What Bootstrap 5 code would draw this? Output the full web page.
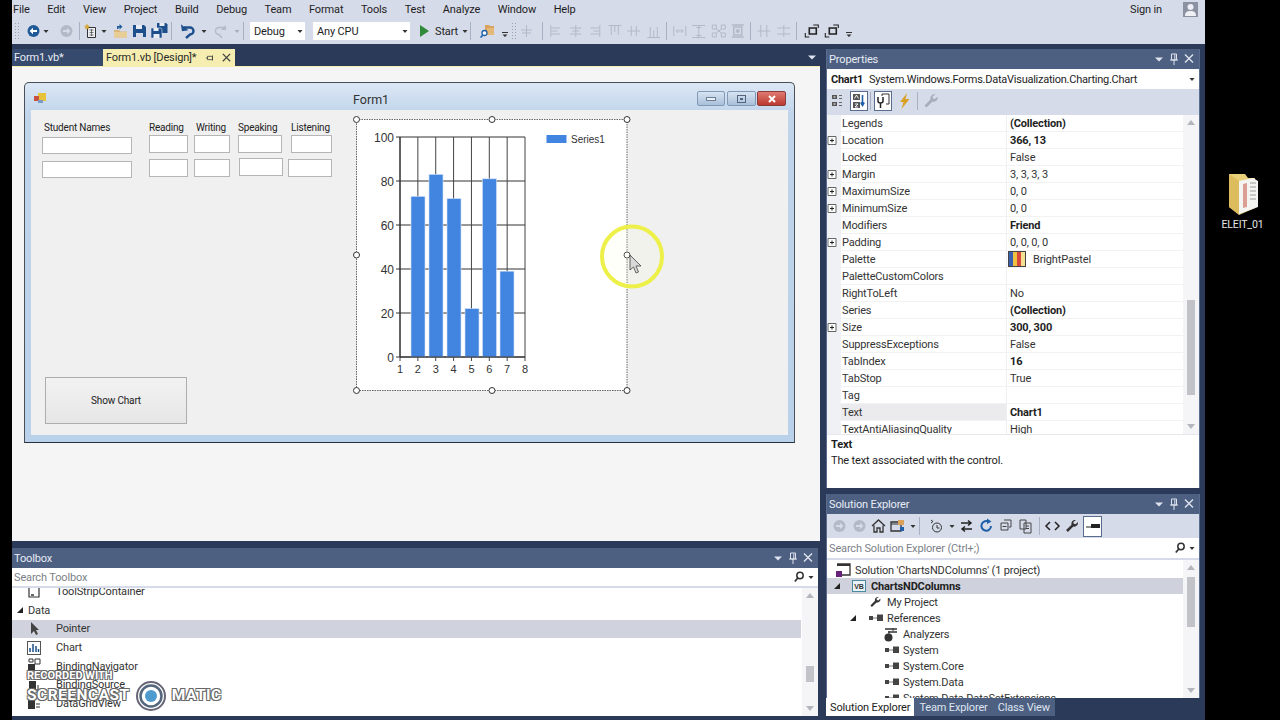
<!DOCTYPE html>
<html lang="en">
<head>
<meta charset="UTF-8">
<title>ChartsNDColumns - Visual Studio</title>
<link href="https://cdn.jsdelivr.net/npm/bootstrap@5.3.0/dist/css/bootstrap.min.css" rel="stylesheet">
<style>
  html, body { height: 720px; overflow: hidden; }
  body { background: #000; font-family: Roboto, "Liberation Sans", sans-serif; font-size: 11px; color: #1e1e1e; line-height: 1; letter-spacing: -.15px; }
  .vs-gutter { width: 12px; flex: none; }
  .vs-window { width: 1193px; flex: none; height: 720px; background: #2a3a58; }
  .vs-desk { width: 75px; flex: none; padding-top: 172px; color: #e6e6e6; font-size: 10.5px; }
  .vs-menubar { height: 20px; background: #d6dbe9; padding-bottom: 1px; }
  .vs-menuitem { padding: 0 8.8px; white-space: nowrap; }
  .vs-menubar .vs-menuitem:first-child { padding-left: 1px; }
  .vs-signin { margin-left: auto; margin-right: 21px; }
  .vs-avatar { margin-right: 7px; }
  .vs-toolbar { height: 24px; background: #d6dbe9; padding: 0 0 2px 2px; }
  .vs-grip { width: 6px; height: 18px; flex: none; background-image: radial-gradient(#9aa1b5 35%, transparent 40%); background-size: 3px 3px; }
  .vs-i { width: 19px; height: 16px; flex: none; display: block; }
  .vs-ia { width: 19.6px; height: 16px; flex: none; display: block; }
  .vs-c { width: 6px; height: 16px; flex: none; display: block; }
  .vs-sep { width: 6px; height: 18px; flex: none; position: relative; }
  .vs-sep::after { content: ""; display: block; width: 1px; height: 18px; margin: 0 auto; background: #a9b0c4; }
  .vs-combo { height: 18px; background: #fff; padding-left: 4px; flex: none; }
  .vs-combo svg { margin-left: auto; margin-right: 2px; }
  .vs-combo-debug { width: 55px; }
  .vs-combo-cpu { width: 97px; }
  .vs-play { margin-left: 5px; }
  .vs-start { margin-left: 1px; }
  .vs-findicon { margin-left: 4px; }
  .vs-grip2 { margin-left: 2px; }
  .vs-tabicon { margin-left: 3px; }
  .vs-main { height: 676px; }
  .vs-left { width: 808px; flex: none; }
  .vs-right { width: 374px; flex: none; margin-left: 6px; padding-top: 5px; }
  .vs-doctabs { height: 23px; border-bottom: 1px solid #f5eeb0; padding-top: 5px; color: #e8ecf4; }
  .vs-tab1 { width: 91px; height: 17px; background: #364a6e; padding: 0 2px; }
  .vs-tab2 { width: 132px; height: 17px; background: #f5eeb0; color: #2a2a2a; padding: 0 3px; white-space: nowrap; }
  .vs-tab2 svg, .vs-tab2 span { flex: none; }
  .vs-tabpin { margin-left: 9px; }
  .vs-tabclose { margin-left: 6px; }
  .vs-docmenu { margin-left: auto; margin-right: 2px; }
  .vs-designer { height: 474px; background: #f5f5f5; padding: 15px 0 0 12px; }
  .vs-form { width: 771px; height: 361px; position: relative; background: linear-gradient(#dbe7f5, #c0d4ea 9%, #b9d1ea); border: 1px solid #4a4f58; border-bottom-color: #28303e; border-radius: 5px 5px 0 0; }
  .vs-client { position: absolute; left: 6px; top: 27px; width: 757px; height: 325px; background: #f0f0f0; }
  .vs-ctl { position: absolute; }
  .vs-formtitle { left: 328px; top: 11px; font-size: 12.5px; color: #333; letter-spacing: 0; }
  .vs-winbtn { top: 8px; height: 15px; border: 1px solid #8199b4; border-radius: 2px; background: linear-gradient(#d6e4f2, #a9c0d9); }
  .vs-winclose { background: linear-gradient(#e07a70, #bb3a30); border-color: #8a3a3a; }
  .vs-label { font-size: 10px; color: #222; white-space: nowrap; letter-spacing: -.2px; }
  .vs-textbox { background: #fff; border: 1px solid #b5b5b5; }
  .vs-showbtn { left: 14px; top: 267px; width: 142px; height: 47px; background: linear-gradient(#f2f2f2, #e6e6e6); border: 1px solid #adadad; font-size: 10px; color: #222; }
  .vs-overlay-svg { position: absolute; left: 325px; top: 27px; overflow: visible; }
  .vs-charttext { font-family: "Liberation Sans", sans-serif; fill: #333; letter-spacing: 0; }
  .vs-toolbox { height: 168px; margin-top: 7px; margin-right: 2px; position: relative; }
  .vs-ptitle { height: 20px; background: #4d6082; color: #e8ecf4; padding: 0 4px 0 2px; flex: none; }
  .vs-ptitle svg { flex: none; }
  .vs-ptitle svg + svg { margin-left: 3px; }
  .vs-search { height: 20px; background: #fff; color: #7c7f88; padding: 0 4px 0 2px; border-bottom: 2px solid #d6dbe9; flex: none; }
  .vs-mag { margin-right: 3px; }
  .vs-search-sol { height: 22px; }
  .vs-toolist { height: 128px; background: #fff; position: relative; overflow: hidden; }
  .vs-toolinner { margin-top: -5.5px; }
  .vs-toolrow { height: 18.6px; padding-left: 22px; color: #333; }
  .vs-toolrow svg { flex: none; margin-right: 14px; }
  .vs-toolicon { margin-left: -8px; }
  .vs-toolsel { background: #d0d3dd; margin-right: 17px; }
  .vs-groupicon { margin-left: -18px; margin-right: 4px !important; }
  .vs-sb { position: absolute; right: 0; top: 0; bottom: 0; width: 16px; background: #f5f5f7; }
  .vs-sbthumb { position: absolute; left: 4px; width: 8px; background: #c2c3c9; }
  .vs-up, .vs-down { position: absolute; left: 4px; width: 0; height: 0; border-left: 4px solid transparent; border-right: 4px solid transparent; }
  .vs-up { top: 5px; border-bottom: 5px solid #b4b6bd; }
  .vs-down { bottom: 5px; border-top: 5px solid #b4b6bd; }
  .vs-watermark { left: 15px; top: 122px; color: #fff; font-weight: 700; letter-spacing: 0; text-shadow: 1px 1px 0 #666, -1px -1px 0 #666, 1px -1px 0 #666, -1px 1px 0 #666; pointer-events: none; }
  .vs-wm1 { font-size: 11px; }
  .vs-wm2 { font-size: 15.5px; margin-top: -1px; letter-spacing: .5px; }
  .vs-wm2 svg { margin: 0 5px 0 5px; }
  .vs-panel { background: #fff; border-left: 1px solid #5a6c8e; border-right: 1px solid #5a6c8e; }
  .vs-props { height: 439px; }
  .vs-selector { height: 20px; background: #fff; padding: 0 4px; flex: none; white-space: nowrap; letter-spacing: -.25px; }
  .vs-selector b { margin-right: 6px; }
  .vs-ptools { height: 26px; background: #d6dbe9; padding: 0 0 2px 1px; flex: none; }
  .vs-picon { width: 21px; height: 16px; display: block; flex: none; }
  .vs-bolt { margin-left: 2px; }
  .vs-pon { background: #fff; border: 1px solid #5a6c8e; width: 18px; height: 20px; padding: 1px; flex: none; margin-left: 1px; }
  .vs-psep { width: 1px; height: 18px; background: #a9b0c4; margin: 0 2px; flex: none; }
  .vs-grid { height: 319px; position: relative; overflow: hidden; background: #fff; flex: none; }
  .vs-prow { height: 17px; position: relative; }
  .vs-pgutter { width: 14px; height: 17px; background: #f0f1f4; flex: none; }
  .vs-pname { width: 166px; height: 17px; padding-left: 1px; border-bottom: 1px solid #f2f2f2; border-right: 1px solid #efefef; color: #333; flex: none; white-space: nowrap; overflow: hidden; }
  .vs-pval { width: 176px; height: 17px; padding-left: 3px; border-bottom: 1px solid #f2f2f2; color: #333; flex: none; white-space: nowrap; }
  .vs-pbold { font-weight: 700; color: #1e1e1e; }
  .vs-phigh { background: #ebebee; }
  .vs-swatch { display: flex; width: 18px; height: 16px; border: 1px solid #444; margin: 0 7px 0 -2px; }
  .vs-swatch i { flex: 1; }
  .vs-desc { height: 54px; background: #fff; padding: 4px 4px; border-top: 1px solid #e8e8ec; flex: none; }
  .vs-desc b { display: block; margin-bottom: 5px; }
  .vs-solution { height: 222px; margin-top: 6px; }
  .vs-stools { height: 24px; background: #d6dbe9; padding-left: 3px; flex: none; }
  .vs-pinbox { width: 19px; height: 21px; background: #fff; border: 1px solid #5a6c8e; flex: none; margin-left: 2px; }
  .vs-tree { height: 138px; background: #fff; position: relative; overflow: hidden; padding-top: 2px; flex: none; }
  .vs-node { height: 16px; white-space: nowrap; color: #333; }
  .vs-node svg { flex: none; }
  .vs-indent { flex: none; }
  .vs-nodesel { background: #cfd2dd; margin-right: 15px; font-weight: 700; color: #222; }
  .vs-btabs { height: 18px; background: #2a3a58; flex: none; margin: 0 -1px; }
  .vs-btab { height: 18px; padding: 1px 5px 0; color: #dfe5f0; background: #4d6082; white-space: nowrap; }
  .vs-bton { background: #fff; color: #222; padding: 1px 4px 0; }
</style>
</head>
<body class="d-flex">
<svg width="0" height="0" class="position-absolute">
  <defs>
    <symbol id="s-caret" viewBox="0 0 6 16"><path d="M0.5 7h5L3 10z" fill="#333"/></symbol>
    <symbol id="s-caretg" viewBox="0 0 6 16"><path d="M0.5 7h5L3 10z" fill="#a7adbd"/></symbol>
    <symbol id="s-over" viewBox="0 0 8 16"><path d="M1 9h6v1H1zM1.5 11.5h5L4 14z" fill="#333"/></symbol>
    <symbol id="s-back" viewBox="0 0 19 16"><circle cx="9.5" cy="8" r="6" fill="#1f5a96"/><path d="M13 7h-4V4.8L5.6 8 9 11.200V9h4z" fill="#fff"/></symbol>
    <symbol id="s-fwd" viewBox="0 0 19 16"><circle cx="9.500" cy="8" r="6" fill="#b4b9c7"/><path d="M6 7h4V4.800L13.400 8 10 11.200V9H6z" fill="#d6dbe9"/></symbol>
    <symbol id="s-new" viewBox="0 0 19 16"><path d="M5.500 4.500h8v10h-8z" fill="#eef0f6" stroke="#333"/><path d="M7.500 7h4M7.500 9.500h4M7.500 12h4M9.500 6v7" stroke="#555" stroke-width=".8"/><path d="M5 .5l1 2 2 .4-1.500 1.500.4 2-1.900-1-1.900 1 .4-2L2 2.900l2-.4z" fill="#d8a93c"/></symbol>
    <symbol id="s-open" viewBox="0 0 19 16"><path d="M3 7h5l1.500 1.500H16v6H3z" fill="#dcb67a"/><path d="M3 9h13v5.500H3z" fill="#e9cd97"/><path d="M6 6V3h2.500V1l3 2.700-3 2.700V4.500H7.500V6z" fill="#1f5a96"/></symbol>
    <symbol id="s-save" viewBox="0 0 19 16"><path d="M3 2h11l2 2v10H3z" fill="#1d4f8c"/><path d="M6 2h6v4H6z" fill="#e8ecf4"/><path d="M6 10h7v4H6z" fill="#d6dbe9"/></symbol>
    <symbol id="s-saveall" viewBox="0 0 19 16"><path d="M8 0h9l1.500 1.500V10H8z" fill="#1d4f8c"/><path d="M10.500 0h5v3h-5z" fill="#e8ecf4"/><path d="M2 5h10l1 1v9H2z" fill="#1d4f8c" stroke="#d6dbe9" stroke-width=".6"/><path d="M4.500 5h5v3h-5zM4.500 11h6v4h-6z" fill="#e8ecf4"/></symbol>
    <symbol id="s-undo" viewBox="0 0 19 16"><path d="M6 4.500h6a3.500 3.500 0 0 1 0 7L8 15" fill="none" stroke="#1d4f8c" stroke-width="2.400"/><path d="M3.500 1v7h6.500z" fill="#1d4f8c" transform="rotate(-8 5 5)"/></symbol>
    <symbol id="s-redo" viewBox="0 0 19 16"><path d="M13 4.500H8a3.500 3.500 0 0 0 0 7l3 3.500" fill="none" stroke="#b4b9c7" stroke-width="1.400"/><path d="M15 2v5h-5z" fill="#b4b9c7"/></symbol>
    <symbol id="s-play" viewBox="0 0 19 16"><path d="M5 2l9 6-9 6z" fill="#2f8a3a"/></symbol>
    <symbol id="s-find" viewBox="0 0 19 16"><path d="M7 2h4l1 1h4v9H7z" fill="#d9a35c"/><path d="M9 5h7v7H9z" fill="#e4b878"/><circle cx="6.500" cy="10" r="2.500" fill="#fff" stroke="#1d5fa8" stroke-width="1.300"/><path d="M5 12l-2.500 2.500" stroke="#1d5fa8" stroke-width="1.600"/></symbol>
    <symbol id="a-plus" viewBox="0 0 19 16"><path d="M9.500 2v12M4 7h11M5 10h9" stroke="#b4b9c8" fill="none"/></symbol>
    <symbol id="a-left" viewBox="0 0 19 16"><path d="M4.500 2v12M5 5h9M5 8h6M5 11h9" stroke="#b4b9c8" fill="none"/></symbol>
    <symbol id="a-center" viewBox="0 0 19 16"><path d="M9.500 2v12M4 5h11M6 8h7M4 11h11" stroke="#b4b9c8" fill="none"/></symbol>
    <symbol id="a-right" viewBox="0 0 19 16"><path d="M14.500 2v12M5 5h9M8 8h6M5 11h9" stroke="#b4b9c8" fill="none"/></symbol>
    <symbol id="a-top" viewBox="0 0 19 16"><path d="M3 2.500h13M6 3v9M9.500 3v6M13 3v9" stroke="#b4b9c8" fill="none"/></symbol>
    <symbol id="a-mid" viewBox="0 0 19 16"><path d="M3 8h13M7 3v10M12 3v10" stroke="#b4b9c8" fill="none"/></symbol>
    <symbol id="a-bot" viewBox="0 0 19 16"><path d="M3 14.500h13M6 4v10M9.500 7v7M13 4v10" stroke="#b4b9c8" fill="none"/></symbol>
    <symbol id="a-hsp" viewBox="0 0 19 16"><path d="M3.500 3v10M15.500 3v10M7 8h5M8 6l-2 2 2 2M11 6l2 2-2 2" stroke="#b4b9c8" fill="none"/></symbol>
    <symbol id="a-vsp" viewBox="0 0 19 16"><path d="M3 2.500h13M3 14.500h13M9.500 3v11M7 4.500h5M7 12.500h5" stroke="#b4b9c8" fill="none"/></symbol>
    <symbol id="a-both" viewBox="0 0 19 16"><path d="M3 2h4v4H3zM12 2h4v4h-4zM3 10h4v4H3zM12 10h4v4h-4zM7 6l5 4M12 6l-5 4" stroke="#b4b9c8" fill="none"/></symbol>
    <symbol id="a-cent" viewBox="0 0 19 16"><path d="M5.500 4h8v8h-8zM3.500 2h12M3.500 14h12" stroke="#b4b9c8" fill="none" stroke-width="1.500"/><circle cx="9.500" cy="8" r="2" fill="#b4b9c8"/></symbol>
    <symbol id="a-h2" viewBox="0 0 19 16"><path d="M6.500 2v12M12.500 2v12M3 8h13" stroke="#b4b9c8" fill="none"/></symbol>
    <symbol id="a-v2" viewBox="0 0 19 16"><path d="M3 5h13M3 11h13M9.500 2v12" stroke="#b4b9c8" fill="none"/></symbol>
    <symbol id="s-tab" viewBox="0 0 19 16"><path d="M7 5h7v6H7z" fill="none" stroke="#222" stroke-width="1.600"/><path d="M11 2h5v3M3 10v4h4" stroke="#222" fill="none" stroke-width="1.100"/></symbol>
    <symbol id="p-cat" viewBox="0 0 21 16"><path d="M4 2h5v4H4zM4 9h5v4H4z" fill="#555"/><path d="M5.500 3.500h2v1h-2zM5.500 10.500h2v1h-2z" fill="#fff"/><path d="M11 2h3v1h-3zM11 5h3v1h-3zM11 9h3v1h-3zM11 12h3v1h-3z" fill="#666"/></symbol>
    <symbol id="p-alpha" viewBox="0 0 14 16"><rect x="1" y="1" width="7" height="6" fill="#555"/><rect x="1" y="9" width="7" height="6" fill="#555"/><path d="M2.500 5.500L4.500 2l2 3.500M3 11h3l-3 3h3" stroke="#fff" fill="none" stroke-width=".9"/><path d="M10.500 2v10M8.800 9.500l1.700 3 1.700-3" stroke="#1d5fa8" stroke-width="1.600" fill="none"/></symbol>
    <symbol id="p-prop" viewBox="0 0 14 16"><path d="M6 3V1h7v10h-3" fill="none" stroke="#333"/><path d="M2 4v4c0 1.500 1 2 2.500 2H4.500v5M7 4v4c0 1.500-1 2-2.500 2" fill="none" stroke="#222" stroke-width="1.500"/></symbol>
    <symbol id="p-bolt" viewBox="0 0 21 16"><path d="M13 0l-7 9h3.500L7.500 16l8-10h-4z" fill="#d9a026"/></symbol>
    <symbol id="p-wrench" viewBox="0 0 21 16"><path d="M15.500 1.500a4 4 0 0 0-5 5L4.500 12.500l2 2 6-6a4 4 0 0 0 5-5L15 6l-2-.5-.5-2z" fill="#a7adbd"/></symbol>
    <symbol id="p-wrenchd" viewBox="0 0 21 16"><path d="M15.500 1.500a4 4 0 0 0-5 5L4.500 12.500l2 2 6-6a4 4 0 0 0 5-5L15 6l-2-.5-.5-2z" fill="#333"/></symbol>
    <symbol id="t-down" viewBox="0 0 12 16"><path d="M2 6.500h8L6 10.500z" fill="#dfe3ee"/></symbol>
    <symbol id="t-pin" viewBox="0 0 12 16"><path d="M3.500 3h5v6h-5zM2 9h8M6 9v5M6.800 3.500v5" stroke="#dfe3ee" fill="none"/></symbol>
    <symbol id="t-close" viewBox="0 0 12 16"><path d="M2 3.500l8 8M10 3.500l-8 8" stroke="#dfe3ee" stroke-width="1.400"/></symbol>
    <symbol id="t-plus" viewBox="0 0 14 17"><path d="M1 4.500h8v8H1z" fill="#fff" stroke="#666"/><path d="M3 8.500h4M5 6.500v4" stroke="#222"/></symbol>
    <symbol id="t-mag" viewBox="0 0 12 16"><circle cx="7" cy="6.500" r="3.200" fill="none" stroke="#333" stroke-width="1.500"/><path d="M4.800 9l-3 3.500" stroke="#333" stroke-width="1.800"/></symbol>
    <symbol id="t-ref" viewBox="0 0 16 16"><path d="M2 6h4v4H2zM10 4.500h6v6.500h-6z" fill="#444"/><path d="M6 8h4" stroke="#777"/></symbol>
    <symbol id="t-expand" viewBox="0 0 8 16"><path d="M7 5v6H1z" fill="#222"/></symbol>
  </defs>
</svg>

<div class="vs-gutter"></div>

<div class="vs-window d-flex flex-column">
  <div class="vs-menubar d-flex align-items-center">
    <span class="vs-menuitem">File</span><span class="vs-menuitem">Edit</span><span class="vs-menuitem">View</span><span class="vs-menuitem">Project</span><span class="vs-menuitem">Build</span><span class="vs-menuitem">Debug</span><span class="vs-menuitem">Team</span><span class="vs-menuitem">Format</span><span class="vs-menuitem">Tools</span><span class="vs-menuitem">Test</span><span class="vs-menuitem">Analyze</span><span class="vs-menuitem">Window</span><span class="vs-menuitem">Help</span>
    <span class="vs-signin">Sign in</span>
    <svg class="vs-avatar" width="15" height="15" viewBox="0 0 15 15"><rect width="15" height="15" fill="#8c91a1"/><circle cx="7.500" cy="5" r="3" fill="#eef0f5"/><path d="M2 14c0-4 2-5 5.500-5S13 10 13 14z" fill="#eef0f5"/></svg>
  </div>

  <div class="vs-toolbar d-flex align-items-center">
    <div class="vs-grip"></div>
    <svg class="vs-i ms-1"><use href="#s-back"/></svg><svg class="vs-c"><use href="#s-caret"/></svg>
    <svg class="vs-i ms-2"><use href="#s-fwd"/></svg><div class="vs-sep"></div>
    <svg class="vs-i"><use href="#s-new"/></svg><svg class="vs-c"><use href="#s-caret"/></svg>
    <svg class="vs-i ms-1"><use href="#s-open"/></svg><svg class="vs-i"><use href="#s-save"/></svg><svg class="vs-i"><use href="#s-saveall"/></svg><div class="vs-sep"></div>
    <svg class="vs-i ms-1"><use href="#s-undo"/></svg><svg class="vs-c ms-1"><use href="#s-caret"/></svg>
    <svg class="vs-i ms-1"><use href="#s-redo"/></svg><svg class="vs-c ms-1"><use href="#s-caretg"/></svg><div class="vs-sep"></div>
    <div class="vs-combo vs-combo-debug d-flex align-items-center ms-1"><span>Debug</span><svg width="6" height="16"><use href="#s-caret"/></svg></div>
    <div class="vs-combo vs-combo-cpu d-flex align-items-center ms-2"><span>Any CPU</span><svg width="6" height="16"><use href="#s-caret"/></svg></div>
    <svg class="vs-i vs-play"><use href="#s-play"/></svg><span class="vs-start">Start</span><svg class="vs-c ms-1"><use href="#s-caret"/></svg><div class="vs-sep"></div>
    <svg class="vs-i vs-findicon"><use href="#s-find"/></svg><svg width="8" height="16" class="ms-1"><use href="#s-over"/></svg>
    <div class="vs-grip vs-grip2"></div>
    <svg class="vs-i"><use href="#a-plus"/></svg><div class="vs-sep ms-1"></div>
    <svg class="vs-ia"><use href="#a-left"/></svg><svg class="vs-ia"><use href="#a-center"/></svg><svg class="vs-ia"><use href="#a-right"/></svg><svg class="vs-ia"><use href="#a-top"/></svg><svg class="vs-ia"><use href="#a-mid"/></svg><svg class="vs-ia"><use href="#a-bot"/></svg><div class="vs-sep"></div>
    <svg class="vs-ia"><use href="#a-hsp"/></svg><svg class="vs-ia"><use href="#a-vsp"/></svg><svg class="vs-ia"><use href="#a-both"/></svg><svg class="vs-ia"><use href="#a-cent"/></svg><div class="vs-sep"></div>
    <svg class="vs-ia"><use href="#a-h2"/></svg><svg class="vs-ia"><use href="#a-v2"/></svg><div class="vs-sep"></div>
    <svg class="vs-ia vs-tabicon"><use href="#s-tab"/></svg><svg class="vs-ia"><use href="#s-tab"/></svg>
    <svg class="ms-1" width="8" height="16"><use href="#s-over"/></svg>
  </div>

  <div class="vs-main d-flex">
    <div class="vs-left d-flex flex-column">
      <div class="vs-doctabs d-flex">
        <div class="vs-tab1 d-flex align-items-center">Form1.vb*</div>
        <div class="vs-tab2 d-flex align-items-center">
          <span>Form1.vb [Design]*</span>
          <svg class="vs-tabpin" width="10" height="16" viewBox="0 0 12 16"><path d="M3 6h6v4H3zM1 8h2M9 5v6" stroke="#444" fill="none"/></svg>
          <svg class="vs-tabclose" width="11" height="16" viewBox="0 0 12 16"><path d="M2 3.500l8 8M10 3.500l-8 8" stroke="#444" stroke-width="1.400"/></svg>
        </div>
        <svg class="vs-docmenu" width="12" height="16"><use href="#t-down"/></svg>
      </div>

      <div class="vs-designer">
        <div class="vs-form">
          <svg class="vs-ctl" style="left:8px;top:9px" width="14" height="12" viewBox="0 0 14 12"><rect x="5" y="1" width="8" height="8" fill="#e8c23a"/><rect x="1" y="4" width="5" height="5" fill="#c8503c"/><rect x="5" y="8" width="5" height="3" fill="#7a9cc4"/></svg>
          <span class="vs-ctl vs-formtitle">Form1</span>
          <div class="vs-ctl vs-winbtn d-flex align-items-center justify-content-center" style="left:672px;width:28px"><svg width="10" height="4"><rect x=".5" y=".5" width="9" height="3" fill="#e9eff6" stroke="#6d7f96"/></svg></div>
          <div class="vs-ctl vs-winbtn d-flex align-items-center justify-content-center" style="left:702px;width:29px"><svg width="9" height="8"><rect x=".5" y=".5" width="8" height="7" fill="none" stroke="#55657c"/><rect x="3" y="3" width="3" height="2" fill="#55657c"/></svg></div>
          <div class="vs-ctl vs-winbtn vs-winclose d-flex align-items-center justify-content-center" style="left:732px;width:29px"><svg width="10" height="8" viewBox="0 0 10 8"><path d="M2 1l6 6M8 1L2 7" stroke="#fff" stroke-width="2"/></svg></div>

          <div class="vs-client">
            <span class="vs-ctl vs-label" style="left:13px;top:13px">Student Names</span>
            <span class="vs-ctl vs-label" style="left:118px;top:13px">Reading</span>
            <span class="vs-ctl vs-label" style="left:165px;top:13px">Writing</span>
            <span class="vs-ctl vs-label" style="left:207px;top:13px">Speaking</span>
            <span class="vs-ctl vs-label" style="left:260px;top:13px">Listening</span>

            <div class="vs-ctl vs-textbox" style="left:11px;top:27px;width:90px;height:17px"></div>
            <div class="vs-ctl vs-textbox" style="left:118px;top:25px;width:39px;height:18px"></div>
            <div class="vs-ctl vs-textbox" style="left:163px;top:25px;width:36px;height:18px"></div>
            <div class="vs-ctl vs-textbox" style="left:207px;top:25px;width:44px;height:18px"></div>
            <div class="vs-ctl vs-textbox" style="left:260px;top:25px;width:41px;height:18px"></div>

            <div class="vs-ctl vs-textbox" style="left:11px;top:51px;width:90px;height:17px"></div>
            <div class="vs-ctl vs-textbox" style="left:118px;top:49px;width:39px;height:18px"></div>
            <div class="vs-ctl vs-textbox" style="left:163px;top:49px;width:36px;height:18px"></div>
            <div class="vs-ctl vs-textbox" style="left:208px;top:48px;width:44px;height:18px"></div>
            <div class="vs-ctl vs-textbox" style="left:257px;top:49px;width:44px;height:18px"></div>

            <div class="vs-ctl vs-showbtn d-flex align-items-center justify-content-center">Show Chart</div>
          </div>

          <svg id="chartSvg" class="vs-overlay-svg" width="320" height="300" viewBox="350 110 320 300"></svg>
        </div>
      </div>

      <div class="vs-toolbox d-flex flex-column">
        <div class="vs-ptitle d-flex align-items-center">
          <span class="me-auto">Toolbox</span>
          <svg width="12" height="16"><use href="#t-down"/></svg><svg width="12" height="16"><use href="#t-pin"/></svg><svg width="12" height="16"><use href="#t-close"/></svg>
        </div>
        <div class="vs-search d-flex align-items-center"><span class="me-auto">Search Toolbox</span><svg class="vs-mag" width="12" height="16"><use href="#t-mag"/></svg><svg width="6" height="16"><use href="#s-caret"/></svg></div>
        <div class="vs-toolist" id="toolList"></div>
        <div class="vs-ctl vs-watermark">
          <div class="vs-wm1">RECORDED WITH</div>
          <div class="vs-wm2 d-flex align-items-center">SCREENCAST<svg width="32" height="32" viewBox="0 0 32 32"><circle cx="16" cy="16" r="14" fill="#fff" stroke="#667" stroke-width="2"/><circle cx="16" cy="16" r="10.500" fill="none" stroke="#54677c" stroke-width="2.500"/><circle cx="16" cy="16" r="6" fill="#4f9bd0"/></svg>MATIC</div>
        </div>
      </div>
    </div>

    <div class="vs-right d-flex flex-column">
      <div class="vs-panel vs-props d-flex flex-column">
        <div class="vs-ptitle d-flex align-items-center">
          <span class="me-auto">Properties</span>
          <svg width="12" height="16"><use href="#t-down"/></svg><svg width="12" height="16"><use href="#t-pin"/></svg><svg width="12" height="16"><use href="#t-close"/></svg>
        </div>
        <div class="vs-selector d-flex align-items-center"><b>Chart1</b><span class="me-auto">System.Windows.Forms.DataVisualization.Charting.Chart</span><svg width="6" height="16"><use href="#s-caret"/></svg></div>
        <div class="vs-ptools d-flex align-items-center">
          <svg class="vs-picon"><use href="#p-cat"/></svg>
          <div class="vs-pon"><svg width="14" height="16"><use href="#p-alpha"/></svg></div>
          <div class="vs-psep"></div>
          <div class="vs-pon"><svg width="14" height="16"><use href="#p-prop"/></svg></div>
          <svg class="vs-picon vs-bolt"><use href="#p-bolt"/></svg>
          <div class="vs-psep"></div>
          <svg class="vs-picon"><use href="#p-wrench"/></svg>
        </div>
        <div class="vs-grid" id="propGrid"></div>
        <div class="vs-desc"><b>Text</b><span>The text associated with the control.</span></div>
      </div>

      <div class="vs-panel vs-solution d-flex flex-column">
        <div class="vs-ptitle d-flex align-items-center">
          <span class="me-auto">Solution Explorer</span>
          <svg width="12" height="16"><use href="#t-down"/></svg><svg width="12" height="16"><use href="#t-pin"/></svg><svg width="12" height="16"><use href="#t-close"/></svg>
        </div>
        <div class="vs-stools d-flex align-items-center">
          <svg class="vs-i"><use href="#s-fwd"/></svg>
          <svg class="vs-i" style="margin-left:1px"><use href="#s-fwd"/></svg>
          <svg class="vs-i" viewBox="0 0 19 16"><path d="M3 8l6.500-6L16 8M5 7.500V14h3v-4h3v4h3V7.500" fill="none" stroke="#333" stroke-width="1.300"/></svg>
          <svg class="vs-i" viewBox="0 0 19 16"><path d="M3 4h10v9H3z" fill="none" stroke="#333" stroke-width="1.300"/><path d="M3 6h10" stroke="#333"/><path d="M10 2h6v5h-6z" fill="#d9a35c"/><rect x="12" y="9" width="4" height="4" fill="#1d5fa8"/></svg>
          <svg class="vs-c" style="margin-left:3px"><use href="#s-caret"/></svg>
          <div class="vs-sep"></div>
          <svg class="vs-i" style="margin-left:5px" viewBox="0 0 19 16"><circle cx="10" cy="9.500" r="4.500" fill="none" stroke="#333"/><path d="M10 7v3h2.500M4 2l2 1.500L4 5" stroke="#333" fill="none"/></svg>
          <svg class="vs-c" style="margin-left:3px"><use href="#s-caret"/></svg>
          <svg class="vs-i" style="margin-left:2px" viewBox="0 0 19 16"><path d="M4 5h10M11 2.500L14 5l-3 2.500M15 11H5M8 8.500L5 11l3 2.500" fill="none" stroke="#222" stroke-width="1.500"/></svg>
          <svg class="vs-i" style="margin-left:1px" viewBox="0 0 19 16"><path d="M14 8a4.800 4.800 0 1 1-2-4" fill="none" stroke="#1d5fa8" stroke-width="2"/><path d="M10 .5l4.500 3-4.500 2.500z" fill="#1d5fa8"/></svg>
          <svg class="vs-i" viewBox="0 0 19 16"><path d="M8 2h7v7h-2M5 5h7v7H5z" fill="#d6dbe9" stroke="#444"/><path d="M6.500 8.500h4" stroke="#444"/></svg>
          <svg class="vs-i" style="margin-left:1px" viewBox="0 0 19 16"><path d="M4 2h6v9H4zM8 5h7v10H8z" fill="#d6dbe9" stroke="#444"/><path d="M10 8h3M10 10.500h3" stroke="#444"/></svg>
          <div class="vs-sep" style="margin-left:1px"></div>
          <svg class="vs-i" style="margin-left:1px" viewBox="0 0 19 16"><path d="M7 4L3 8l4 4M12 4l4 4-4 4" fill="none" stroke="#222" stroke-width="1.500"/></svg>
          <svg class="vs-i"><use href="#p-wrenchd"/></svg>
          <div class="vs-pinbox d-flex align-items-center justify-content-center"><svg width="14" height="6"><path d="M0 4h5" stroke="#222"/><rect x="5" y="1" width="9" height="4" fill="#222"/></svg></div>
        </div>
        <div class="vs-search vs-search-sol d-flex align-items-center"><span class="me-auto">Search Solution Explorer (Ctrl+;)</span><svg class="vs-mag" width="12" height="16"><use href="#t-mag"/></svg><svg width="6" height="16"><use href="#s-caret"/></svg></div>
        <div class="vs-tree" id="solTree"></div>
        <div class="vs-btabs d-flex">
          <div class="vs-btab vs-bton d-flex align-items-center">Solution Explorer</div>
          <div class="vs-btab d-flex align-items-center">Team Explorer</div>
          <div class="vs-btab d-flex align-items-center">Class View</div>
        </div>
      </div>
    </div>
  </div>
</div>

<div class="vs-desk d-flex flex-column align-items-center">
  <svg width="36" height="44" viewBox="0 0 36 44">
    <path d="M4 2h16l3 4h7v30L14 43l-10-8z" fill="#e9cf79"/>
    <path d="M14 9l14-3 5 3v26l-19 7z" fill="#f4f4f2"/>
    <path d="M18 12l4-1v24l-4 1z" fill="#cf7a6a" opacity=".7"/>
    <path d="M25 11h6M25 15h6M25 19h6M25 23h6M25 27h6" stroke="#9a9a9a"/>
    <path d="M4 2l10 7v33L4 35z" fill="#dcbc5c"/>
  </svg>
  <div class="mt-1">ELEIT_01</div>
</div>

<script>
  // properties grid: [name, value, bold, has plus box]
  const props = [
    ["Legends", "(Collection)", true, false],
    ["Location", "366, 13", true, true],
    ["Locked", "False", false, false],
    ["Margin", "3, 3, 3, 3", false, true],
    ["MaximumSize", "0, 0", false, true],
    ["MinimumSize", "0, 0", false, true],
    ["Modifiers", "Friend", true, false],
    ["Padding", "0, 0, 0, 0", false, true],
    ["Palette", "BrightPastel", false, false],
    ["PaletteCustomColors", "", false, false],
    ["RightToLeft", "No", false, false],
    ["Series", "(Collection)", true, false],
    ["Size", "300, 300", true, true],
    ["SuppressExceptions", "False", false, false],
    ["TabIndex", "16", true, false],
    ["TabStop", "True", false, false],
    ["Tag", "", false, false],
    ["Text", "Chart1", true, false],
    ["TextAntiAliasingQuality", "High", false, false]
  ];
  const swatch = '<span class="vs-swatch"><i style="background:#3a5fb0"></i><i style="background:#f0c040"></i><i style="background:#d8483c"></i><i style="background:#f4e090"></i></span>';
  let gridHtml = "";
  props.forEach(p => {
    gridHtml += `<div class="vs-prow d-flex">
      <div class="vs-pgutter">${p[3] ? '<svg width="14" height="17"><use href="#t-plus"/></svg>' : ""}</div>
      <div class="vs-pname d-flex align-items-center ${p[0] === "Text" ? "vs-phigh" : ""}">${p[0]}</div>
      <div class="vs-pval d-flex align-items-center ${p[2] ? "vs-pbold" : ""}">${p[0] === "Palette" ? swatch : ""}${p[1]}</div>
    </div>`;
  });
  gridHtml += '<div class="vs-sb"><div class="vs-up"></div><div class="vs-sbthumb" style="top:185px;height:95px"></div><div class="vs-down"></div></div>';
  document.getElementById("propGrid").innerHTML = gridHtml;

  // solution tree: [label, indent, icon, has arrow, selected]
  const icons = {
    sln: '<svg width="16" height="16" viewBox="0 0 16 16"><path d="M2 2h13v11H7" fill="none" stroke="#333" stroke-width="1.300"/><path d="M2 2h13v2H2z" fill="#333"/><rect x="1" y="9" width="6" height="6" fill="#68217a"/></svg>',
    vb: '<svg width="16" height="16" viewBox="0 0 16 16"><rect x="1.500" y="2.500" width="13" height="11" fill="#eaf2f5" stroke="#4a8aa0"/><text x="8" y="11" text-anchor="middle" font-size="7" fill="#333" font-family="Liberation Sans, sans-serif">VB</text></svg>',
    wrench: '<svg width="16" height="16" viewBox="0 0 21 16"><use href="#p-wrenchd"/></svg>',
    ref: '<svg width="16" height="16"><use href="#t-ref"/></svg>',
    ana: '<svg width="16" height="16" viewBox="0 0 16 16"><path d="M2 3h12M5 6h9" stroke="#333" stroke-width="1.400"/><path d="M10 2v3M6 5v3" stroke="#333"/><circle cx="5.500" cy="11.500" r="4" fill="#333"/></svg>'
  };
  const tree = [
    ["Solution 'ChartsNDColumns' (1 project)", 12, "sln", false, false],
    ["ChartsNDColumns", 28, "vb", true, true],
    ["My Project", 44, "wrench", false, false],
    ["References", 44, "ref", true, false],
    ["Analyzers", 60, "ana", false, false],
    ["System", 60, "ref", false, false],
    ["System.Core", 60, "ref", false, false],
    ["System.Data", 60, "ref", false, false],
    ["System.Data.DataSetExtensions", 60, "ref", false, false]
  ];
  let treeHtml = "";
  tree.forEach(n => {
    treeHtml += `<div class="vs-node d-flex align-items-center ${n[4] ? "vs-nodesel" : ""}">
      <span style="width:${n[1] - 4}px" class="vs-indent d-flex justify-content-end">${n[3] ? '<svg width="8" height="16" style="margin-right:10px"><use href="#t-expand"/></svg>' : ""}</span>
      ${icons[n[2]]}<span class="ms-1">${n[0]}</span></div>`;
  });
  treeHtml += '<div class="vs-sb"><div class="vs-up"></div><div class="vs-sbthumb" style="top:17px;height:50px"></div><div class="vs-down"></div></div>';
  document.getElementById("solTree").innerHTML = treeHtml;

  // toolbox items
  const toolIcon = {
    strip: '<path d="M3 3h10v10H3z" fill="none" stroke="#333" stroke-width="1.200"/><path d="M5 11h3" stroke="#333" stroke-width="1.500"/>',
    pointer: '<path d="M5 1v12l3-3 2 4 2-1-2-4h3z" fill="#444"/>',
    chart: '<rect x="1.500" y="1.500" width="13" height="13" fill="#fff" stroke="#555"/><path d="M4 12V8M7 12V4M10 12V6M12.500 12V9" stroke="#1d4f8c" stroke-width="1.500"/>',
    nav: '<path d="M2 6h7v8H2z" fill="#333"/><path d="M9 1h5v5H9zM3 1h4v3H3z" fill="none" stroke="#333"/>',
    source: '<path d="M3 4h7v9H3z" fill="#333"/><path d="M12 8v5h-2" stroke="#333" fill="none"/>',
    view: '<path d="M2 4h7v10H2z" fill="#333"/><path d="M10 9h4M10 12h4" stroke="#333"/>'
  };
  const tools = [
    ["ToolStripContainer", "strip"], ["Data", null], ["Pointer", "pointer"], ["Chart", "chart"],
    ["BindingNavigator", "nav"], ["BindingSource", "source"], ["DataGridView", "view"]
  ];
  let toolHtml = '<div class="vs-toolinner">';
  tools.forEach(t => {
    const icon = t[1]
      ? `<svg class="vs-toolicon" width="16" height="16" viewBox="0 0 16 16">${toolIcon[t[1]]}</svg>`
      : '<svg class="vs-groupicon" width="8" height="16"><use href="#t-expand"/></svg>';
    toolHtml += `<div class="vs-toolrow d-flex align-items-center ${t[0] === "Pointer" ? "vs-toolsel" : ""}">${icon}<span>${t[0]}</span></div>`;
  });
  toolHtml += '</div><div class="vs-sb"><div class="vs-up"></div><div class="vs-sbthumb" style="top:78px;height:16px"></div><div class="vs-down"></div></div>';
  document.getElementById("toolList").innerHTML = toolHtml;

  // chart drawn in screen coordinates through the viewBox
  const bars = [[418, 73], [436, 83], [454, 72], [472, 22], [489.500, 81], [507, 39]];
  const y0 = 357, yPer = 2.2;
  let svg = '<rect x="357" y="119" width="270" height="271" fill="#fff"/>';
  for (let v = 0; v <= 100; v += 20) {
    const y = y0 - v * yPer;
    svg += `<path d="M396 ${y}H525" stroke="#333"/>`;
    svg += `<text class="vs-charttext" x="394" y="${y + 4.500}" text-anchor="end" font-size="12">${v}</text>`;
  }
  for (let i = 0; i < 8; i++) {
    const x = 400 + i * 17.860;
    svg += `<path d="M${x} 137V361" stroke="#444"/>`;
    svg += `<text class="vs-charttext" x="${x}" y="373" text-anchor="middle" font-size="11">${i + 1}</text>`;
  }
  bars.forEach(b => {
    svg += `<rect x="${b[0] - 7}" y="${y0 - b[1] * yPer}" width="14" height="${b[1] * yPer}" fill="#4285e0" stroke="#cfe0f7" stroke-width=".6"/>`;
  });
  svg += '<path d="M400 137V357H525" fill="none" stroke="#222"/>';
  svg += '<rect x="546.500" y="135" width="20" height="8" fill="#4285e0"/>';
  svg += '<text class="vs-charttext" x="571" y="143" font-size="10">Series1</text>';
  svg += '<rect x="356.500" y="119.500" width="270.500" height="271" fill="none" stroke="#666" stroke-dasharray="1.500 1"/>';
  [[356.500, 119.500], [492, 119.500], [627, 119.500], [356.500, 255], [627, 255], [356.500, 390.500], [492, 390.500], [627, 390.500]].forEach(h => {
    svg += `<circle cx="${h[0]}" cy="${h[1]}" r="3" fill="#fff" stroke="#333"/>`;
  });
  svg += '<circle cx="632" cy="256.500" r="30" fill="rgba(255,255,220,.18)" stroke="#eef04a" stroke-width="4"/>';
  svg += '<path d="M630 255v15l3.500-3 2.500 6 2.500-1-2.500-6h5z" fill="#d8d8d8" stroke="#444" stroke-width=".8"/>';
  document.getElementById("chartSvg").innerHTML = svg;
</script>
<script src="https://cdn.jsdelivr.net/npm/bootstrap@5.3.0/dist/js/bootstrap.bundle.min.js"></script>
</body>
</html>
